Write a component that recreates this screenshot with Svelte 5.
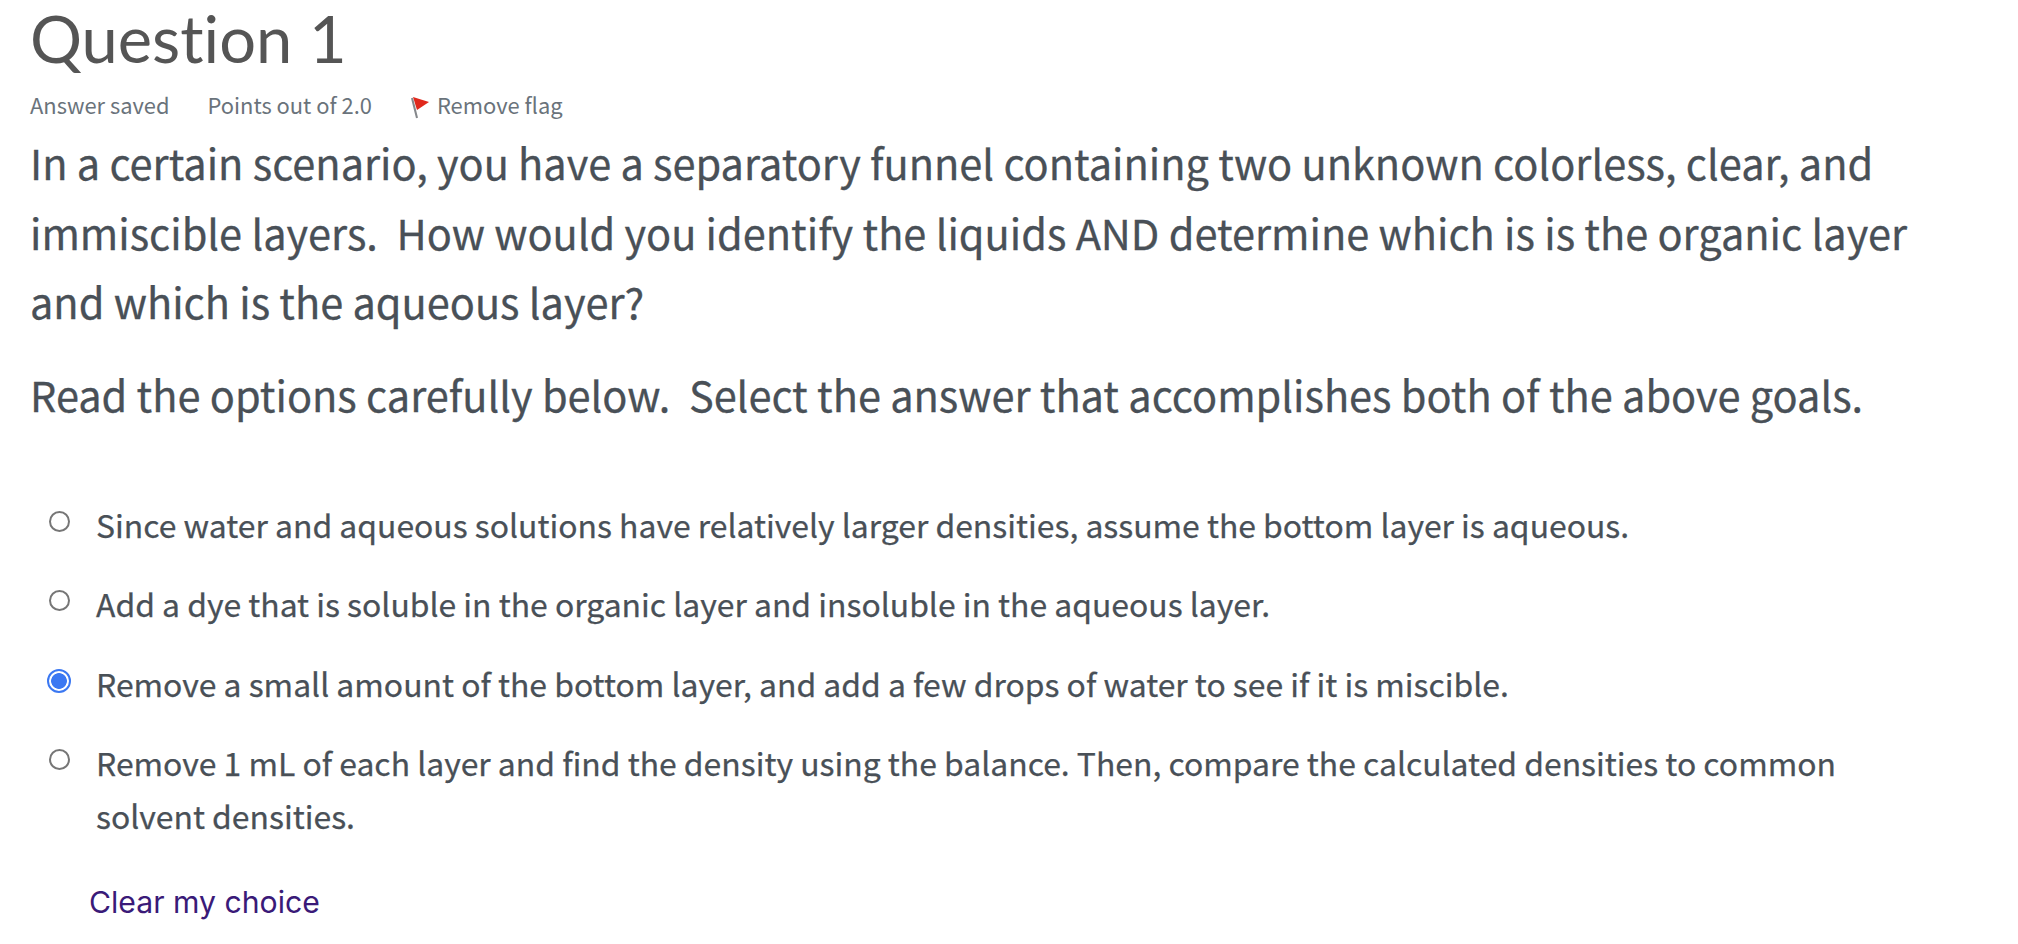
<script>
  const options = [
    'Since water and aqueous solutions have relatively larger densities, assume the bottom layer is aqueous.',
    'Add a dye that is soluble in the organic layer and insoluble in the aqueous layer.',
    'Remove a small amount of the bottom layer, and add a few drops of water to see if it is miscible.',
    'Remove 1 mL of each layer and find the density using the balance. Then, compare the calculated densities to common solvent densities.'
  ];
  let picked = $state(2);
</script>

<main class="question">
  <h3>Question 1</h3>
  <div class="meta">
    <span>Answer saved</span>
    <span>Points out of 2.0</span>
    <span class="flag">
      <svg viewBox="0 0 20 24" width="20" height="24" aria-hidden="true">
        <path d="M2 3 L7 23" stroke="#85888c" stroke-width="2" fill="none" />
        <path d="M3 2 L19 7 L7 15 Z" fill="#e0281c" />
      </svg>
      Remove flag
    </span>
  </div>
  <div class="qtext">
    <p>In a certain scenario, you have a separatory funnel containing two unknown colorless, clear, and immiscible layers.&nbsp; How would you identify the liquids AND determine which is is the organic layer and which is the aqueous layer?</p>
    <p>Read the options carefully below.&nbsp; Select the answer that accomplishes both of the above goals.</p>
  </div>
  <div class="answers">
    {#each options as text, i}
      <label class="answer">
        <span class="slot"><input type="radio" name="q1" checked={picked === i} onchange={() => (picked = i)} /></span>
        <span>{text}</span>
      </label>
    {/each}
  </div>
  <a class="clear" href="#clear" onclick={(e) => { e.preventDefault(); picked = -1; }}>Clear my choice</a>
</main>

<style>
  :global(body) { background: #fff; }
  .question {
    width: 1960px;
    padding-left: 30px;
    font-family: "Noto Sans CJK SC", "Noto Sans", sans-serif;
    color: #495057;
  }
  h3 {
    margin: 0;
    font-family: Lato, sans-serif;
    font-weight: 400;
    font-size: 65px;
    line-height: 76px;
    font-variant-ligatures: none;
    color: #555;
  }
  .meta {
    box-sizing: border-box;
    display: flex;
    gap: 38px;
    height: 52px;
    padding-top: 5px;
    align-items: center;
    font-size: 21.9px;
    color: #6a737b;
  }
  .flag { display: flex; align-items: center; gap: 7px; }
  .flag svg { margin-top: 4px; }
  .qtext { font-size: 41.5px; line-height: 69.5px; -webkit-text-stroke: 0.3px #495057; }
  .qtext p { margin: 0 0 23px; }
  .answers { margin-top: 69px; width: 1880px; -webkit-text-stroke: 0.25px #495057; }
  .answer {
    display: flex;
    font-size: 31.9px;
    line-height: 53px;
    margin-bottom: 26.4px;
  }
  .slot {
    flex: none;
    display: flex;
    justify-content: center;
    width: 58px;
    margin-right: 8px;
  }
  .slot input {
    appearance: none;
    box-sizing: border-box;
    width: 21px;
    height: 21px;
    margin: 13px 0 0 0;
    border: 2px solid #767676;
    border-radius: 50%;
    background: #fff;
  }
  .slot input:checked {
    width: 24px;
    height: 24px;
    margin-top: 12px;
    border: 2px solid #3b78f2;
    background: radial-gradient(circle, #3b78f2 0 7.5px, #fff 8.2px);
  }
  .clear {
    display: block;
    margin-left: 59px;
    margin-top: 35.4px;
    font-family: Inter, sans-serif;
    font-size: 30.2px;
    line-height: 48px;
    color: #3a1a78;
    text-decoration: none;
  }
</style>
